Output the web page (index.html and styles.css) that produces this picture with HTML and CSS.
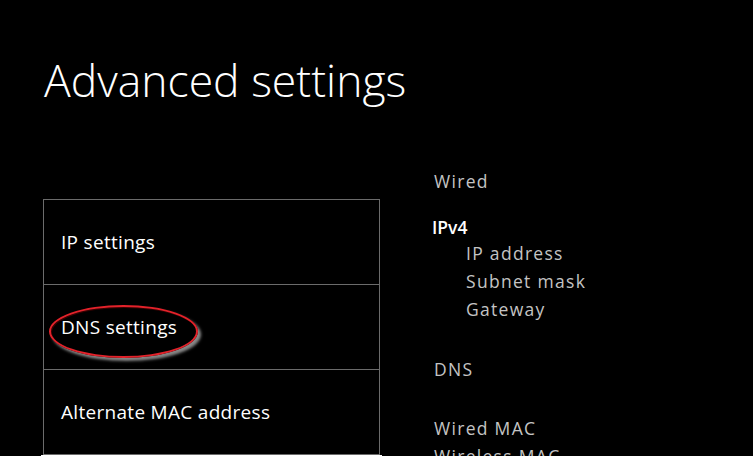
FILE: index.html
```html
<!DOCTYPE html>
<html lang="en">
  <head>
    <meta charset="UTF-8" />
    <meta name="viewport" content="width=device-width, initial-scale=1.0" />
    <title>Advanced settings</title>
    <link rel="stylesheet" href="styles.css">
  </head>
  <body>
    <main class="screen">
      <h1 class="title">Advanced settings</h1>
      <div class="content">
        <ul class="menu">
          <li class="item">IP settings</li>
          <li class="item marked">
            DNS settings
            <span class="ring"></span>
          </li>
          <li class="item">Alternate MAC address</li>
          <li class="item focus"></li>
        </ul>
        <div class="info">
          <p class="head">Wired</p>
          <p class="group">IPv4</p>
          <p class="sub">IP address</p>
          <p class="sub">Subnet mask</p>
          <p class="sub">Gateway</p>
          <p class="head dns">DNS</p>
          <p class="head mac">Wired MAC</p>
          <p class="head">Wireless MAC</p>
        </div>
      </div>
    </main>
  </body>
</html>
```

FILE: styles.css
```css
html,
body {
  margin: 0;
  padding: 0;
  background-color: #000;
  overflow: hidden;
}

.screen {
  width: 753px;
  height: 456px;
  overflow: hidden;
  font-family: "Open Sans", "Noto Sans", sans-serif;
  color: #fff;
}

.title {
  margin: 0;
  padding: 48px 0 0 44px;
  font-size: 44.5px;
  font-weight: 300;
  line-height: 64px;
}

.content {
  display: flex;
  align-items: flex-start;
  gap: 54px;
  padding-left: 43px;
  margin-top: 55px;
}

/* left list */
.menu {
  list-style: none;
  margin: 32px 0 0 0;
  padding: 0;
  width: 335px;
  border: 1px solid #6b6b6b;
  border-bottom: none;
}

.item {
  position: relative;
  display: flex;
  align-items: center;
  height: 84px;
  padding-left: 17px;
  font-size: 19px;
  letter-spacing: 0.3px;
  border-bottom: 1px solid #6b6b6b;
}

.focus {
  margin: 0 -3px;
  border-top: 3px solid #fff;
  border-bottom: none;
}

.ring {
  position: absolute;
  left: 5px;
  top: 20px;
  width: 145px;
  height: 49px;
  border: 2px solid #e3222a;
  border-radius: 50%;
  box-shadow: 3px 3px 3px rgba(160, 160, 160, 0.85), inset 1px 1px 0 #3a0000;
}

/* right column */
.info p {
  margin: 0;
  font-size: 17.5px;
  line-height: 28px;
  letter-spacing: 1.3px;
  color: #c4c4c4;
}

.info .group {
  margin: 18px 0 -2px -2px;
  color: #fff;
  font-weight: 600;
  letter-spacing: 0;
}

.info .sub {
  padding-left: 32px;
}

.info .dns {
  margin-top: 32px;
}

.info .mac {
  margin-top: 31px;
}
```
